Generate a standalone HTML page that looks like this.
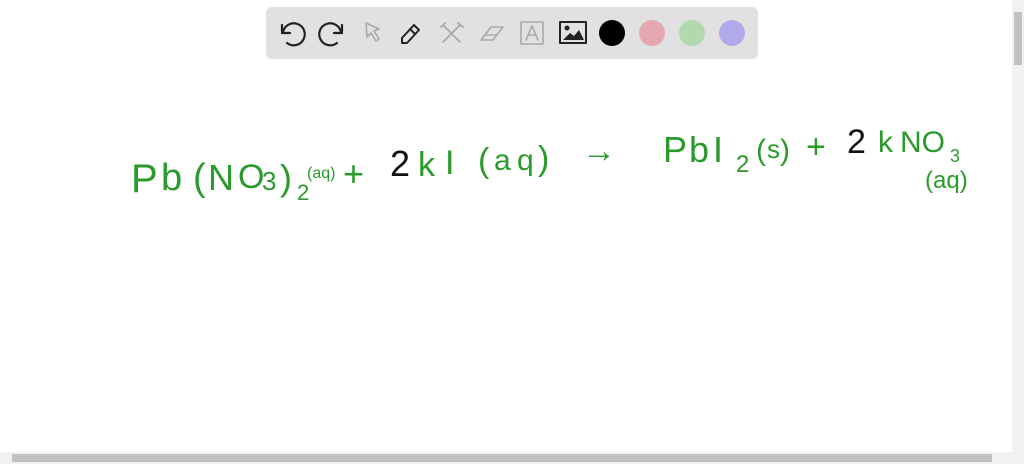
<!DOCTYPE html>
<html><head><style>
html,body{margin:0;padding:0;width:1024px;height:464px;overflow:hidden;background:#fff;position:relative}
.tb{position:absolute;left:266px;top:7px;width:492px;height:52px;background:#e1e1e1;border-radius:6px}
svg{position:absolute;left:0;top:0}
</style></head><body>
<div class="tb"></div>
<svg width="1024" height="464" viewBox="0 0 1024 464">
<g fill="none" stroke-linecap="round" stroke-linejoin="round">
 <path d="M282 25 v8 h8" stroke="#222" stroke-width="2.2"/>
 <path d="M283 32 A11 11 0 1 1 287 43" stroke="#222" stroke-width="2.2"/>
 <path d="M342 25 v8 h-8" stroke="#222" stroke-width="2.2"/>
 <path d="M341 32 A11 11 0 1 0 337 43" stroke="#222" stroke-width="2.2"/>
 <path d="M366 23 l13 6 -5 2 5 8 -3 2 -5 -8 -4 4 z" stroke="#aaa" stroke-width="1.6"/>
 <path d="M402 38 l12 -13 5 5 -12 13 h-5 z M410 29 l5 5" stroke="#222" stroke-width="2"/>
 <path d="M443 25 l17 17 M460 25 l-17 17 M441 27 l4 -4 M458 23 l5 4" stroke="#aaa" stroke-width="1.8"/>
 <path d="M481 40 l10 -13 h12 l-10 13 z M485 35 h12" stroke="#aaa" stroke-width="1.6"/>
 <rect x="521" y="22" width="22" height="22" stroke="#aaa" stroke-width="1.6"/>
 <path d="M526 40 l6 -14 6 14 M528 35 h8" stroke="#aaa" stroke-width="1.6"/>
 <rect x="560" y="22" width="26" height="21" stroke="#222" stroke-width="2"/>
</g>
<circle cx="567" cy="28" r="2.5" fill="#222"/>
<path d="M563 40 l7 -7 4 3 5 -6 5 10 z" fill="#222"/>
<circle cx="612" cy="33" r="13" fill="#000"/>
<circle cx="652" cy="33" r="13" fill="#e6a8b0"/>
<circle cx="692" cy="33" r="13" fill="#b2d8ae"/>
<circle cx="732" cy="33" r="13" fill="#b0aaea"/>
<rect x="1012" y="0" width="12" height="452" fill="#f1f1f1"/>
<rect x="1014" y="12" width="8" height="53" fill="#c1c1c1"/>
<rect x="0" y="452" width="1024" height="12" fill="#f1f1f1"/>
<rect x="12" y="454" width="980" height="8" fill="#c1c1c1"/>
<g font-family="Liberation Sans, sans-serif" fill="#2a9a2a">
 <text x="131" y="192" font-size="40">P</text>
 <text x="161" y="190" font-size="38">b</text>
 <text x="193" y="190" font-size="38">(</text>
 <text x="208" y="190" font-size="36">N</text>
 <text x="238" y="188" font-size="34">O</text>
 <text x="262" y="190" font-size="26">3</text>
 <text x="280" y="190" font-size="36">)</text>
 <text x="297" y="200" font-size="22">2</text>
 <text x="307" y="178" font-size="16">(aq)</text>
 <text x="343" y="186" font-size="36">+</text>
 <text x="390" y="176" font-size="36" fill="#111">2</text>
 <text x="418" y="176" font-size="34">k</text>
 <text x="445" y="174" font-size="34">I</text>
 <text x="478" y="172" font-size="34">(</text>
 <text x="494" y="170" font-size="30">a</text>
 <text x="517" y="170" font-size="30">q</text>
 <text x="538" y="170" font-size="34">)</text>
 <text x="582" y="162" font-size="34">→</text>
 <text x="663" y="162" font-size="36">P</text>
 <text x="689" y="162" font-size="36">b</text>
 <text x="713" y="162" font-size="36">I</text>
 <text x="736" y="172" font-size="24">2</text>
 <text x="756" y="160" font-size="30">(</text>
 <text x="767" y="158" font-size="26">s</text>
 <text x="780" y="160" font-size="30">)</text>
 <text x="806" y="158" font-size="34">+</text>
 <text x="847" y="153" font-size="34" fill="#111">2</text>
 <text x="878" y="152" font-size="30">k</text>
 <text x="900" y="152" font-size="30">NO</text>
 <text x="950" y="162" font-size="18">3</text>
 <text x="925" y="188" font-size="24">(aq)</text>
</g>
</svg>
</body></html>
